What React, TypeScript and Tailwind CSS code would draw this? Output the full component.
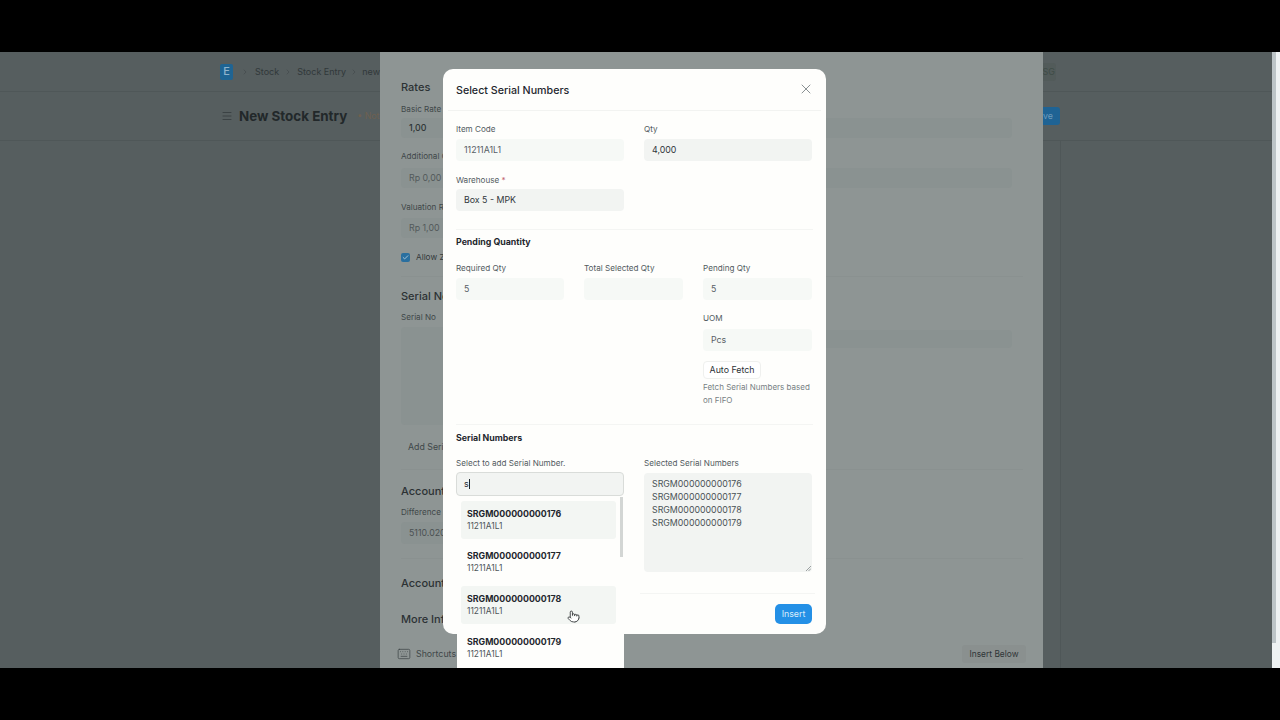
import { ChevronRight, Menu, Keyboard, X, Check, Pointer } from "lucide-react";

function Label({ children, tight }: { children: React.ReactNode; tight?: boolean }) {
  return <div className={`text-[8.15px] leading-[12px] text-[#525b5f] ${tight ? "mb-[3px]" : "mb-[4px]"}`}>{children}</div>;
}

function Field({ label, value, light, dark, tight, className }: { label: React.ReactNode; value?: string; light?: boolean; dark?: boolean; tight?: boolean; className?: string }) {
  return (
    <div className={className}>
      <Label tight={tight}>{label}</Label>
      <div className={`h-[22px] rounded-[4px] px-[8px] flex items-center text-[8.8px] ${light ? "bg-[#f6f9f6] text-[#586065]" : "bg-[#f2f4f2] text-[#30363a]"} ${dark ? "text-[#1f272e]" : ""}`}>
        {value}
      </div>
    </div>
  );
}

function Option({ serial, active }: { serial: string; active?: boolean }) {
  return (
    <div className={`h-[38px] w-[155px] rounded-[3px] px-[6px] pb-[2px] flex flex-col justify-center mb-[4.7px] ${active ? "bg-[#f3f6f3]" : ""}`}>
      <div className="text-[8.8px] leading-[13px] font-bold text-[#1f272e]">{serial}</div>
      <div className="text-[8.4px] leading-[12px] text-[#4c5458]">11211A1L1</div>
    </div>
  );
}

function BgLabel({ children }: { children: React.ReactNode }) {
  return <div className="text-[8.15px] leading-[12px] text-[#3f4749] whitespace-nowrap">{children}</div>;
}

function BgInput({ children, wide }: { children?: React.ReactNode; wide?: boolean }) {
  return (
    <div className={`h-[20px] rounded-[4px] bg-[#8a9291] px-[8px] flex items-center text-[8.8px] text-[#52595a] ${wide ? "w-[611px]" : "w-[400px]"}`}>
      {children}
    </div>
  );
}

function BgHeading({ children }: { children: React.ReactNode }) {
  return <div className="text-[11px] leading-[14px] font-medium text-[#2c3234] whitespace-nowrap">{children}</div>;
}

function Modal() {
  return (
    <div className="absolute left-[443px] top-[17px] w-[383px] h-[565px] rounded-[10px] bg-[#fefefc] flex flex-col">
      <div className="h-[42px] mx-[5px] px-[8px] border-b border-[#f2f3f1] flex items-center justify-between shrink-0">
        <div className="mt-[3px] text-[10.7px] font-medium text-[#1f272e]">Select Serial Numbers</div>
        <X className="w-[16px] h-[16px] -mt-[1px] -mr-[1px] text-[#777f82]" strokeWidth={1.3} />
      </div>

      <div className="px-[13px] pt-[12px] flex flex-col">
        <div className="grid grid-cols-[168px_168px] gap-x-[20px] gap-y-[13px]">
          <Field label="Item Code" value="11211A1L1" light />
          <Field label="Qty" value="4,000" />
          <Field label={<>Warehouse <span className="text-[#c0656b]">*</span></>} value="Box 5 - MPK" dark tight />
        </div>

        <div className="mt-[18px] border-t border-[#f4f5f3] pt-[6px] text-[8.8px] leading-[12px] font-bold text-[#1f272e]">Pending Quantity</div>

        <div className="mt-[14px] grid grid-cols-[108px_99px_109px] gap-x-[20px] items-start">
          <Field label="Required Qty" value="5" light />
          <Field label="Total Selected Qty" light />
          <div className="flex flex-col">
            <Field label="Pending Qty" value="5" light />
            <Field label="UOM" value="Pcs" light className="mt-[12px] [&>div:last-child]:mt-[5px]" />
            <div className="mt-[10px] w-[58px] h-[18px] rounded-[4px] border border-[#eff0ee] bg-white flex items-center justify-center text-[8.8px] text-[#2c3236]">Auto Fetch</div>
            <div className="mt-[2px] text-[8px] leading-[13px] text-[#777f83] whitespace-nowrap">Fetch Serial Numbers based<br />on FIFO</div>
          </div>
        </div>

        <div className="mt-[17px] border-t border-[#f4f5f3] pt-[7px] text-[8.8px] leading-[12px] font-bold text-[#1f272e]">Serial Numbers</div>

        <div className="mt-[13px] grid grid-cols-[168px_168px] gap-x-[20px]">
          <div className="relative">
            <Label>Select to add Serial Number.</Label>
            <div className="h-[24px] -mt-[1px] rounded-[4px] bg-[#f2f4f2] border border-[#d9dcd9] px-[7px] flex items-center text-[8.8px] text-[#1f272e]">
              s<span className="w-px h-[10px] bg-[#1f272e]" />
            </div>
            <div className="absolute left-[1px] top-[39px] w-[167px] h-[190px] bg-[#fefefc] overflow-hidden pl-[4px] pt-[5px] z-10">
              <Option serial="SRGM000000000176" active />
              <Option serial="SRGM000000000177" />
              <Option serial="SRGM000000000178" active />
              <Option serial="SRGM000000000179" />
              <div className="absolute right-[1px] top-[1px] w-[3px] h-[60px] bg-[#d3d6d4]" />
            </div>
          </div>
          <div>
            <Label>Selected Serial Numbers</Label>
            <div className="relative h-[99px] rounded-[4px] bg-[#f2f4f2] px-[8px] pt-[4px] text-[8.8px] leading-[13px] text-[#4a5256]">
              <div>SRGM000000000176</div>
              <div>SRGM000000000177</div>
              <div>SRGM000000000178</div>
              <div>SRGM000000000179</div>
              <svg viewBox="0 0 6 6" className="absolute right-[1px] bottom-[1px] w-[5px] h-[5px]">
                <path d="M0 6 L6 0 M3 6 L6 3" stroke="#8a9092" strokeWidth="1" />
              </svg>
            </div>
          </div>
        </div>
      </div>

      <div className="mt-[21px] ml-[197px] w-[175px] border-t border-[#f4f5f3] pt-[10px] pr-[3px] flex justify-end">
        <div className="w-[37px] h-[20px] rounded-[5px] bg-[#2490e6] text-[#d9ecfb] text-[8.8px] flex items-center justify-center">Insert</div>
      </div>
    </div>
  );
}

export default function App() {
  return (
    <div className="w-[1280px] h-[720px] bg-black flex flex-col overflow-hidden font-[Inter,sans-serif]">
      <div className="h-[52px] shrink-0" />
      <div className="relative h-[616px] flex overflow-hidden">
        {/* page behind the dialog */}
        <div className="w-[380px] shrink-0 bg-[#565e5f] overflow-hidden">
          <div className="h-[40px] border-b border-[#4f5758] pl-[220px] flex items-center whitespace-nowrap text-[9px] text-[#31383a]">
            <div className="w-[16px] h-[16px] rounded-[2px] bg-[#1f6493] flex items-center justify-center text-[11px] font-medium text-[#8fb4cd]">E</div>
            <ChevronRight className="w-[10px] h-[10px] ml-[8px] mr-[6px] text-[#3b4244]" strokeWidth={1.5} />
            <span>Stock</span>
            <ChevronRight className="w-[10px] h-[10px] mx-[5px] text-[#3b4244]" strokeWidth={1.5} />
            <span>Stock Entry</span>
            <ChevronRight className="w-[10px] h-[10px] mx-[4px] text-[#3b4244]" strokeWidth={1.5} />
            <span>new</span>
          </div>
          <div className="h-[49px] border-b border-[#4f5758] pl-[221px] flex items-center whitespace-nowrap">
            <Menu className="w-[12px] h-[12px] mr-[6px] text-[#33393b]" strokeWidth={1.5} />
            <span className="text-[13.4px] font-bold text-[#22282a]">New Stock Entry</span>
            <span className="ml-[10px] text-[8.8px] text-[#6e6050]">• Not</span>
          </div>
        </div>

        <div className="w-[663px] shrink-0 bg-[#8e9594] pl-[21px] pt-[28px] flex flex-col">
          <BgHeading>Rates</BgHeading>
          <div className="mt-[9px]"><BgLabel>Basic Rate</BgLabel></div>
          <div className="mt-[3px]"><BgInput wide><span className="font-medium text-[#2c3234]">1,00</span></BgInput></div>
          <div className="mt-[12px]"><BgLabel>Additional Cost</BgLabel></div>
          <div className="mt-[6px]"><BgInput wide>Rp 0,00</BgInput></div>
          <div className="mt-[13px]"><BgLabel>Valuation Rate</BgLabel></div>
          <div className="mt-[5px]"><BgInput>Rp 1,00</BgInput></div>
          <div className="mt-[13px] flex items-center text-[8.2px] text-[#33393b] h-[12px]">
            <div className="w-[9px] h-[9px] rounded-[2px] bg-[#2a6f9f] flex items-center justify-center mr-[6px]">
              <Check className="w-[7px] h-[7px] text-[#b8d0e0]" strokeWidth={3} />
            </div>
            Allow Zero Valuation Rate
          </div>
          <div className="mt-[13px] w-[622px] border-t border-[#8a9190]" />
          <div className="mt-[12px]"><BgHeading>Serial No</BgHeading></div>
          <div className="mt-[8px]"><BgLabel>Serial No</BgLabel></div>
          <div className="mt-[4px] h-[98px] w-[611px] flex justify-between items-start">
            <div className="h-[98px] w-[300px] rounded-[4px] bg-[#8a9291]" />
            <div className="mt-[3px] h-[18px] w-[300px] rounded-[4px] bg-[#8a9291]" />
          </div>
          <div className="mt-[16px] ml-[7px] text-[8.8px] leading-[12px] text-[#3f4749] whitespace-nowrap">Add Serial No</div>
          <div className="mt-[16px] w-[622px] border-t border-[#8a9190]" />
          <div className="mt-[14px]"><BgHeading>Accounting</BgHeading></div>
          <div className="mt-[8px]"><BgLabel>Difference Account</BgLabel></div>
          <div className="mt-[4px] h-[22px] w-[400px] rounded-[4px] bg-[#8a9291] px-[8px] flex items-center text-[8.8px] text-[#4a5153]">5110.020 - Stock</div>
          <div className="mt-[14px] w-[622px] border-t border-[#8a9190]" />
          <div className="mt-[17px]"><BgHeading>Accounting Dimensions</BgHeading></div>
          <div className="mt-[22px]"><BgHeading>More Information</BgHeading></div>
          <div className="mt-[19px] -ml-[4px] w-[629px] flex items-center justify-between">
            <div className="flex items-center text-[8.8px] text-[#3f4749]">
              <Keyboard className="w-[14px] h-[14px] mr-[5px] text-[#3f4749]" strokeWidth={1.3} />
              Shortcuts
            </div>
            <div className="w-[64px] h-[18px] rounded-[3px] bg-[#8a908f] flex items-center justify-center text-[8.4px] text-[#2f3537]">Insert Below</div>
          </div>
        </div>

        <div className="flex-1 bg-[#565e5f] overflow-hidden">
          <div className="h-[40px] border-b border-[#4f5758] pt-[11px]">
            <div className="w-[13px] h-[18px] rounded-r-[3px] bg-[#525b5a] overflow-hidden flex justify-end items-center pr-[1px] text-[9px] text-[#3f4c47] whitespace-nowrap">MSG</div>
          </div>
          <div className="h-[49px] border-b border-[#4f5758] flex items-center">
            <div className="w-[17px] h-[18px] rounded-r-[3px] bg-[#1f6394] overflow-hidden flex justify-end items-center pr-[7px] text-[8.8px] text-[#6f9bbb] whitespace-nowrap">Save</div>
          </div>
          <div className="ml-[17px] h-full border-l border-[#4f5758]" />
        </div>

        <div className="w-[8px] shrink-0 bg-[#eef2f3] flex">
          <div className="w-[4px] h-[591px] bg-[#bcc4c7]" />
        </div>

        <Modal />

        {/* mouse pointer */}
        <Pointer className="absolute left-[567px] top-[558px] w-[13px] h-[13px] text-[#2b2f31] fill-white z-20" strokeWidth={1.6} />
      </div>
      <div className="h-[52px] shrink-0" />
    </div>
  );
}
